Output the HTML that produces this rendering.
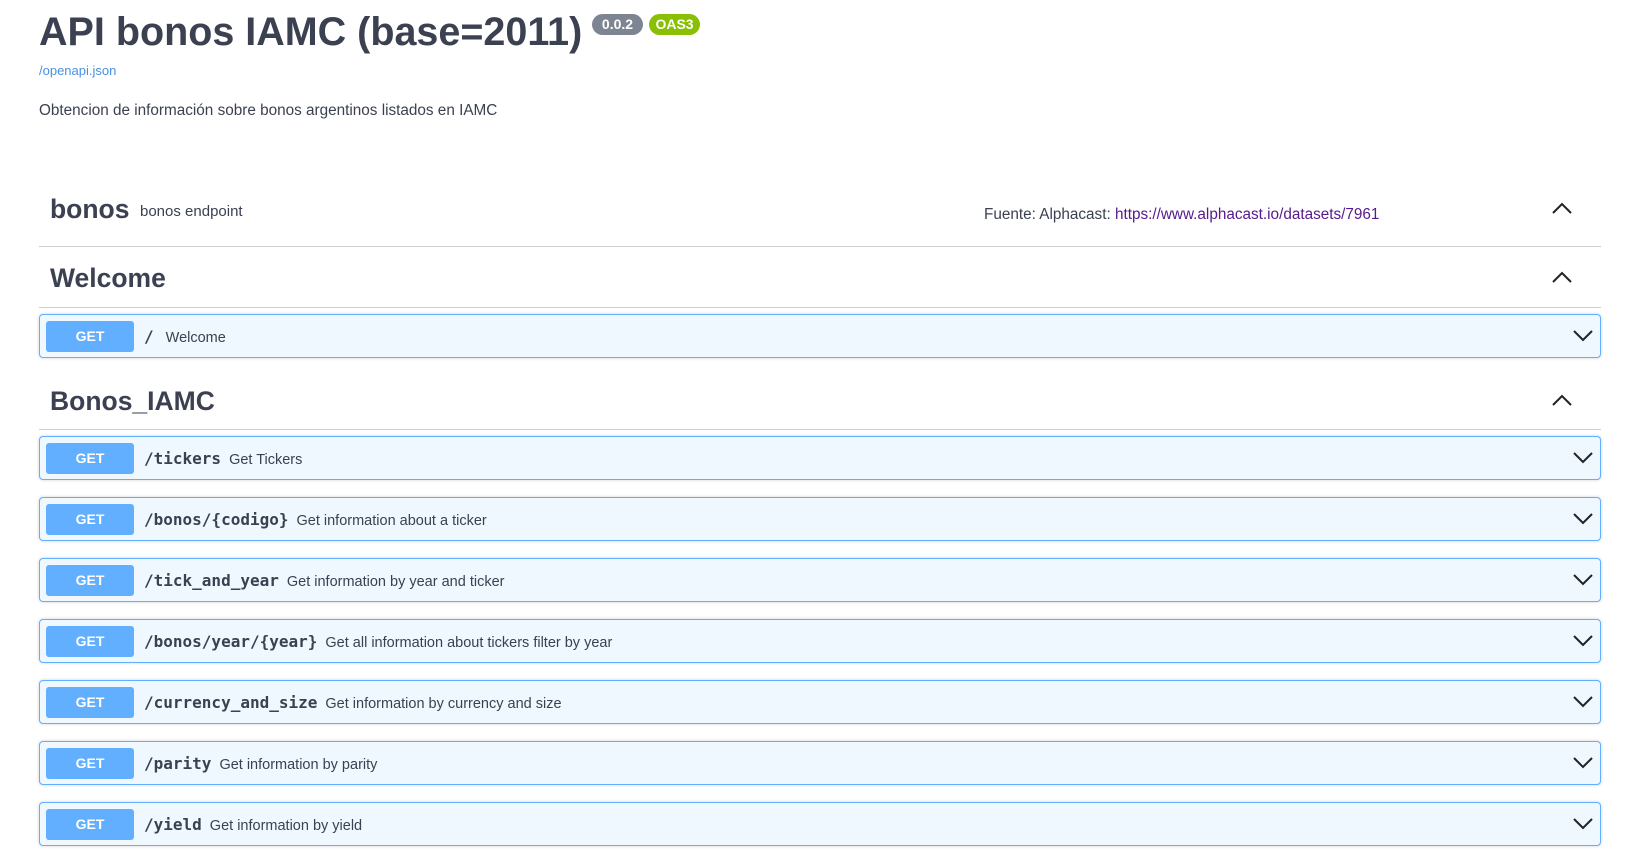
<!DOCTYPE html>
<html><head><meta charset="utf-8"><style>
body{margin:0;background:#fff;font-family:"Liberation Sans",Arial,sans-serif;color:#3b4151;width:1641px;height:864px;overflow:hidden;position:relative}
.a{position:absolute}
h1{position:absolute;left:39px;top:10px;margin:0;font-size:39.5px;font-weight:700;color:#3b4151;white-space:nowrap}
.badge{position:absolute;top:14px;height:21px;line-height:21px;border-radius:11px;color:#fff;font-weight:700;font-size:14px;text-align:center;font-family:"Liberation Sans",sans-serif}
.line{position:absolute;left:39px;width:1562px;height:1px;background:#cfcfcf}
.tag{position:absolute;left:50px;font-weight:700;font-size:26.5px;color:#3b4151}
.op{position:absolute;left:39px;width:1560px;height:42px;border:1px solid #61affe;border-radius:4px;background:#eff7ff;box-shadow:0 0 3px rgba(0,0,0,.19)}
.get{position:absolute;left:6px;top:6px;width:88px;height:31px;border-radius:3px;background:#61affe;color:#fff;font-weight:700;font-size:14px;line-height:31px;text-align:center}
.path{position:absolute;left:104px;top:0;line-height:43px;font-family:"DejaVu Sans Mono","Liberation Mono",monospace;font-weight:700;font-size:16px;color:#3b4151;white-space:nowrap}
.path span{font-family:"Liberation Sans",sans-serif;font-weight:400;font-size:14.5px;margin-left:8px}
.dn{position:absolute;right:7px;top:15px}
.up{position:absolute;left:1552px}
</style></head><body>
<h1>API bonos IAMC (base=2011)</h1>
<div class="badge" style="left:592px;width:51px;background:#7d8492">0.0.2</div>
<div class="badge" style="left:649px;width:51px;background:#89bf04">OAS3</div>
<div class="a" style="left:39px;top:63px;font-size:13px;color:#4990e2">/openapi.json</div>
<div class="a" style="left:39px;top:102px;font-size:15.3px;color:#3b4151">Obtencion de información sobre bonos argentinos listados en IAMC</div>

<div class="tag" style="top:194px">bonos</div>
<div class="a" style="left:140px;top:203px;font-size:15px">bonos endpoint</div>
<div class="a" style="left:984px;top:206px;font-size:15.3px">Fuente: Alphacast: <span style="color:#551a8b">https://www.alphacast.io/datasets/7961</span></div>
<svg class="up" style="top:202px" width="20" height="12" viewBox="0 0 20 12"><path d="M1 11 L10 2 L19 11" fill="none" stroke="#222" stroke-width="2"/></svg>
<div class="line" style="top:246px"></div>

<div class="tag" style="top:263px">Welcome</div>
<svg class="up" style="top:271px" width="20" height="12" viewBox="0 0 20 12"><path d="M1 11 L10 2 L19 11" fill="none" stroke="#222" stroke-width="2"/></svg>
<div class="line" style="top:307px"></div>
<div class="op" style="top:314px"><div class="get">GET</div><div class="path">/<span style="margin-left:12px">Welcome</span></div><svg class="dn" width="20" height="12" viewBox="0 0 20 12"><path d="M1 1 L10 10 L19 1" fill="none" stroke="#222" stroke-width="2"/></svg></div>

<div class="tag" style="top:386px">Bonos_IAMC</div>
<svg class="up" style="top:394px" width="20" height="12" viewBox="0 0 20 12"><path d="M1 11 L10 2 L19 11" fill="none" stroke="#222" stroke-width="2"/></svg>
<div class="line" style="top:429px"></div>

<div class="op" style="top:436px"><div class="get">GET</div><div class="path">/tickers<span>Get Tickers</span></div><svg class="dn" width="20" height="12" viewBox="0 0 20 12"><path d="M1 1 L10 10 L19 1" fill="none" stroke="#222" stroke-width="2"/></svg></div>
<div class="op" style="top:497px"><div class="get">GET</div><div class="path">/bonos/{codigo}<span>Get information about a ticker</span></div><svg class="dn" width="20" height="12" viewBox="0 0 20 12"><path d="M1 1 L10 10 L19 1" fill="none" stroke="#222" stroke-width="2"/></svg></div>
<div class="op" style="top:558px"><div class="get">GET</div><div class="path">/tick_and_year<span>Get information by year and ticker</span></div><svg class="dn" width="20" height="12" viewBox="0 0 20 12"><path d="M1 1 L10 10 L19 1" fill="none" stroke="#222" stroke-width="2"/></svg></div>
<div class="op" style="top:619px"><div class="get">GET</div><div class="path">/bonos/year/{year}<span>Get all information about tickers filter by year</span></div><svg class="dn" width="20" height="12" viewBox="0 0 20 12"><path d="M1 1 L10 10 L19 1" fill="none" stroke="#222" stroke-width="2"/></svg></div>
<div class="op" style="top:680px"><div class="get">GET</div><div class="path">/currency_and_size<span>Get information by currency and size</span></div><svg class="dn" width="20" height="12" viewBox="0 0 20 12"><path d="M1 1 L10 10 L19 1" fill="none" stroke="#222" stroke-width="2"/></svg></div>
<div class="op" style="top:741px"><div class="get">GET</div><div class="path">/parity<span>Get information by parity</span></div><svg class="dn" width="20" height="12" viewBox="0 0 20 12"><path d="M1 1 L10 10 L19 1" fill="none" stroke="#222" stroke-width="2"/></svg></div>
<div class="op" style="top:802px"><div class="get">GET</div><div class="path">/yield<span>Get information by yield</span></div><svg class="dn" width="20" height="12" viewBox="0 0 20 12"><path d="M1 1 L10 10 L19 1" fill="none" stroke="#222" stroke-width="2"/></svg></div>
</body></html>
